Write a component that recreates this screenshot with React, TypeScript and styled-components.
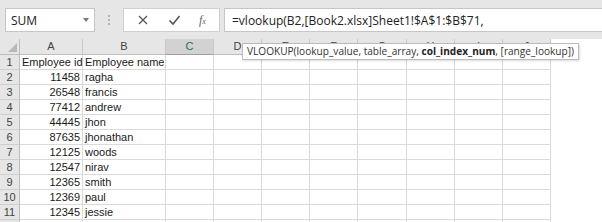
import React from "react";
import styled, { createGlobalStyle } from "styled-components";

const Global = createGlobalStyle`
  html, body { margin: 0; padding: 0; background: #ffffff; }
  body { width: 602px; height: 222px; overflow: hidden; font-family: "Open Sans", "Liberation Sans", sans-serif; }
`;

const Page = styled.div`
  position: relative;
  width: 602px;
  height: 222px;
  overflow: hidden;
  background: #ffffff;
`;

const Bar = styled.div`
  display: flex;
  align-items: flex-start;
  height: 39px;
  padding: 8px 0 0 5px;
  box-sizing: border-box;
  background: #e6e6e6;
`;

const NameBox = styled.div`
  width: 90px;
  height: 24px;
  box-sizing: border-box;
  background: #fff;
  border: 1px solid #c6c6c6;
  display: flex;
  align-items: center;
  justify-content: space-between;
  padding: 0 5px 0 5px;
  font-size: 12px;
  color: #222;
`;

const Caret = styled.span`
  width: 0;
  height: 0;
  border-left: 3.5px solid transparent;
  border-right: 3.5px solid transparent;
  border-top: 4px solid #777;
`;

const Dots = styled.div`
  width: 28px;
  height: 24px;
  display: flex;
  flex-direction: column;
  align-items: center;
  justify-content: center;
  gap: 2px;
  span { width: 2px; height: 2px; background: #b5b5b5; }
`;

const Buttons = styled.div`
  width: 97px;
  height: 24px;
  box-sizing: border-box;
  background: #fff;
  border: 1px solid #d0d0d0;
  display: flex;
  align-items: center;
  justify-content: space-around;
  padding: 0 4px;
  margin-right: 4px;
`;

const Fx = styled.span`
  font-family: "Liberation Serif", serif;
  font-style: italic;
  font-size: 12px;
  color: #666;
  sub { font-size: 8px; vertical-align: 0; }
`;

const Input = styled.div`
  flex: 1;
  height: 24px;
  box-sizing: border-box;
  background: #fff;
  border: 1px solid #c6c6c6;
  border-right: none;
  padding: 0 0 0 7px;
  display: flex;
  align-items: center;
  font-size: 12px;
  color: #222;
  white-space: nowrap;
`;

const COLS = [20, 63, 83, 48, 48, 48, 48, 49, 48, 48, 48];

const Grid = styled.div`
  display: grid;
  grid-template-columns: ${COLS.map((c) => c + "px").join(" ")};
  grid-auto-rows: 15px;
  grid-template-rows: 16px;
  font-family: "Liberation Sans", sans-serif;
  font-size: 11px;
  color: #1a1a1a;
`;

const Cell = styled.div<{ $align?: "left" | "right" }>`
  box-sizing: border-box;
  border-right: 1px solid #dadada;
  border-bottom: 1px solid #dadada;
  padding: 0 2px;
  line-height: 14px;
  white-space: nowrap;
  overflow: visible;
  text-align: ${(p) => p.$align || "left"};
`;

const Head = styled.div<{ $active?: boolean }>`
  box-sizing: border-box;
  background: ${(p) => (p.$active ? "#d2d2d2" : "#e6e6e6")};
  color: ${(p) => (p.$active ? "#217346" : "#444")};
  border-right: 1px solid #c8c8c8;
  border-bottom: 1px solid ${(p) => (p.$active ? "#9e9e9e" : "#bdbdbd")};
  text-align: center;
  line-height: 15px;
  font-size: 11px;
`;

const RowHead = styled.div`
  box-sizing: border-box;
  background: #e6e6e6;
  color: #444;
  border-right: 1px solid #bdbdbd;
  border-bottom: 1px solid #cfcfcf;
  text-align: center;
  line-height: 14px;
  font-size: 11px;
`;

const Corner = styled.div`
  box-sizing: border-box;
  background: #e6e6e6;
  border-right: 1px solid #bdbdbd;
  border-bottom: 1px solid #bdbdbd;
  position: relative;
  &::after {
    content: "";
    position: absolute;
    right: 2px;
    bottom: 2px;
    width: 0;
    height: 0;
    border-left: 9px solid transparent;
    border-bottom: 9px solid #b8b8b8;
  }
`;

const Tip = styled.div`
  position: absolute;
  left: 242px;
  top: 43px;
  height: 17px;
  box-sizing: border-box;
  padding: 0 4px;
  background: #fff;
  border: 1px solid #bcbcbc;
  box-shadow: 1px 1px 2px rgba(0, 0, 0, 0.15);
  font-family: "Open Sans", sans-serif;
  font-size: 10.1px;
  line-height: 15px;
  color: #333;
  white-space: nowrap;
  b { font-weight: 700; color: #222; }
`;

const rows: [string, string][] = [
  ["11458", "ragha"],
  ["26548", "francis"],
  ["77412", "andrew"],
  ["44445", "jhon"],
  ["87635", "jhonathan"],
  ["12125", "woods"],
  ["12547", "nirav"],
  ["12365", "smith"],
  ["12369", "paul"],
  ["12345", "jessie"],
];

const letters = ["A", "B", "C", "D", "E", "F", "G", "H", "I", "J"];
const EMPTY = COLS.length - 3;

export default function App() {
  return (
    <Page>
      <Global />
      <Bar>
        <NameBox>
          <span>SUM</span>
          <Caret />
        </NameBox>
        <Dots>
          <span />
          <span />
          <span />
        </Dots>
        <Buttons>
          <svg width="12" height="12" viewBox="0 0 12 12">
            <path d="M2 2 L10 10 M10 2 L2 10" stroke="#555" strokeWidth="1.3" fill="none" />
          </svg>
          <svg width="13" height="12" viewBox="0 0 13 12">
            <path d="M1.5 6.5 L5 10 L11.5 2" stroke="#555" strokeWidth="1.6" fill="none" />
          </svg>
          <Fx>
            f<sub>x</sub>
          </Fx>
        </Buttons>
        <Input>=vlookup(B2,[Book2.xlsx]Sheet1!$A$1:$B$71,</Input>
      </Bar>
      <Grid>
        <Corner />
        {letters.map((l) => (
          <Head key={l} $active={l === "C"}>
            {l}
          </Head>
        ))}
        <RowHead>1</RowHead>
        <Cell>Employee id</Cell>
        <Cell>Employee name</Cell>
        {Array.from({ length: EMPTY }).map((_, i) => (
          <Cell key={i} />
        ))}
        {rows.map(([id, name], r) => (
          <React.Fragment key={id}>
            <RowHead>{r + 2}</RowHead>
            <Cell $align="right">{id}</Cell>
            <Cell>{name}</Cell>
            {Array.from({ length: EMPTY }).map((_, i) => (
              <Cell key={i} />
            ))}
          </React.Fragment>
        ))}
        <RowHead />
        {Array.from({ length: EMPTY + 2 }).map((_, i) => (
          <Cell key={i} />
        ))}
      </Grid>
      <Tip>
        VLOOKUP(lookup_value, table_array, <b>col_index_num</b>, [range_lookup])
      </Tip>
    </Page>
  );
}
